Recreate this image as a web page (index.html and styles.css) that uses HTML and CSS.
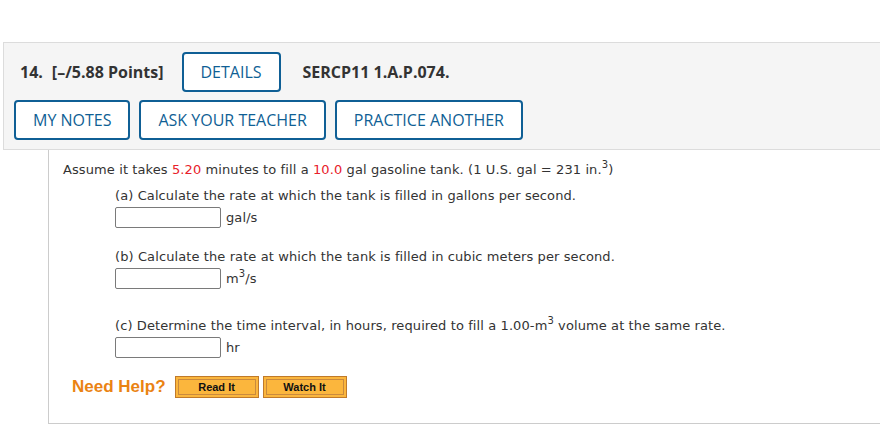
FILE: index.html
```html
<!DOCTYPE html>
<html>
<head>
<meta charset="utf-8">
<link rel="stylesheet" href="styles.css">
</head>
<body>
<div class="page">
  <div class="qhead">
    <div class="row">
      <span class="qnum">14.</span>
      <span class="points">[–/5.88 Points]</span>
      <button class="obtn details">DETAILS</button>
      <span class="code">SERCP11 1.A.P.074.</span>
    </div>
    <div class="row row2">
      <button class="obtn">MY NOTES</button>
      <button class="obtn">ASK YOUR TEACHER</button>
      <button class="obtn">PRACTICE ANOTHER</button>
    </div>
  </div>
  <div class="qbody">
    <p class="intro">Assume it takes <span class="red">5.20</span> minutes to fill a <span class="red">10.0</span> gal gasoline tank. (1 U.S. gal = 231 in.<sup>3</sup>)</p>
    <div class="part pa">
      <p class="ask">(a) Calculate the rate at which the tank is filled in gallons per second.</p>
      <div class="answer"><span class="box"></span><span class="unit">gal/s</span></div>
    </div>
    <div class="part pb">
      <p class="ask">(b) Calculate the rate at which the tank is filled in cubic meters per second.</p>
      <div class="answer"><span class="box"></span><span class="unit">m<sup>3</sup>/s</span></div>
    </div>
    <div class="part pc">
      <p class="ask">(c) Determine the time interval, in hours, required to fill a 1.00-m<sup>3</sup> volume at the same rate.</p>
      <div class="answer"><span class="box"></span><span class="unit">hr</span></div>
    </div>
    <div class="help">
      <span class="needhelp">Need Help?</span>
      <span class="hbtn">Read It</span>
      <span class="hbtn">Watch It</span>
    </div>
  </div>
</div>
</body>
</html>
```

FILE: styles.css
```css
html, body {
  margin: 0;
  padding: 0;
  background: #fff;
  overflow: hidden;
}
.page {
  padding-top: 42px;
  padding-left: 3px;
  width: 920px;
}
.qhead {
  background: #f5f5f5;
  border: 1px solid #dcdcdc;
  padding: 9px 10px 9px 10px;
  font-family: "Open Sans", sans-serif;
}
.row {
  display: flex;
  align-items: center;
  height: 40px;
}
.row2 {
  margin-top: 8px;
  gap: 9px;
}
.qnum {
  font-weight: 700;
  font-size: 16px;
  color: #333;
  margin-left: 6px;
}
.points {
  font-weight: 700;
  font-size: 16px;
  color: #333;
  margin-left: 9px;
}
.code {
  font-weight: 700;
  font-size: 16px;
  color: #333;
  margin-left: 22px;
}
.obtn {
  font-family: "Open Sans", sans-serif;
  font-size: 16px;
  font-weight: 500;
  color: #0f5f95;
  background: #fff;
  border: 2px solid #0f5f95;
  border-radius: 4px;
  height: 40px;
  padding: 0 17px;
  box-sizing: border-box;
  margin: 0;
}
.details {
  margin-left: 19px;
  padding: 0 17px 0 16px;
}
.qbody {
  margin-left: 45px;
  border-left: 1px solid #cccccc;
  border-bottom: 1px solid #cccccc;
  padding: 11px 0 0 14px;
  font-family: "DejaVu Sans", Verdana, sans-serif;
  font-size: 13px;
  letter-spacing: 0.1px;
  color: #333;
  height: 262px;
}
p {
  margin: 0;
  line-height: 18px;
}
sup {
  font-size: 10px;
  line-height: 0;
  vertical-align: 6px;
}
.red {
  color: #e8202a;
}
.part {
  margin-left: 52px;
}
.pa { margin-top: 8px; }
.pb { margin-top: 20px; }
.pc { margin-top: 28px; }
.answer {
  display: flex;
  align-items: center;
  margin-top: 2px;
}
.box {
  display: inline-block;
  width: 104px;
  height: 19px;
  border: 1px solid #7a7a7a;
  border-radius: 2px;
  background: #fff;
}
.unit {
  margin-left: 5px;
  line-height: 18px;
}
.help {
  display: flex;
  align-items: center;
  margin-top: 18px;
  margin-left: 9px;
  letter-spacing: 0;
}
.needhelp {
  font-family: "Liberation Sans", Arial, sans-serif;
  font-weight: 700;
  font-size: 17px;
  color: #ea8313;
  margin-right: 9px;
}
.hbtn {
  display: flex;
  align-items: center;
  justify-content: center;
  width: 82px;
  height: 20px;
  border: 1px solid #c07a2a;
  box-shadow: inset 0 0 0 2px #fbb63d, inset 0 0 0 3px #c98a3e;
  background: #fbb63d;
  font-family: "Liberation Sans", Arial, sans-serif;
  font-weight: 700;
  font-size: 11px;
  color: #111;
  margin-right: 4px;
}
```
